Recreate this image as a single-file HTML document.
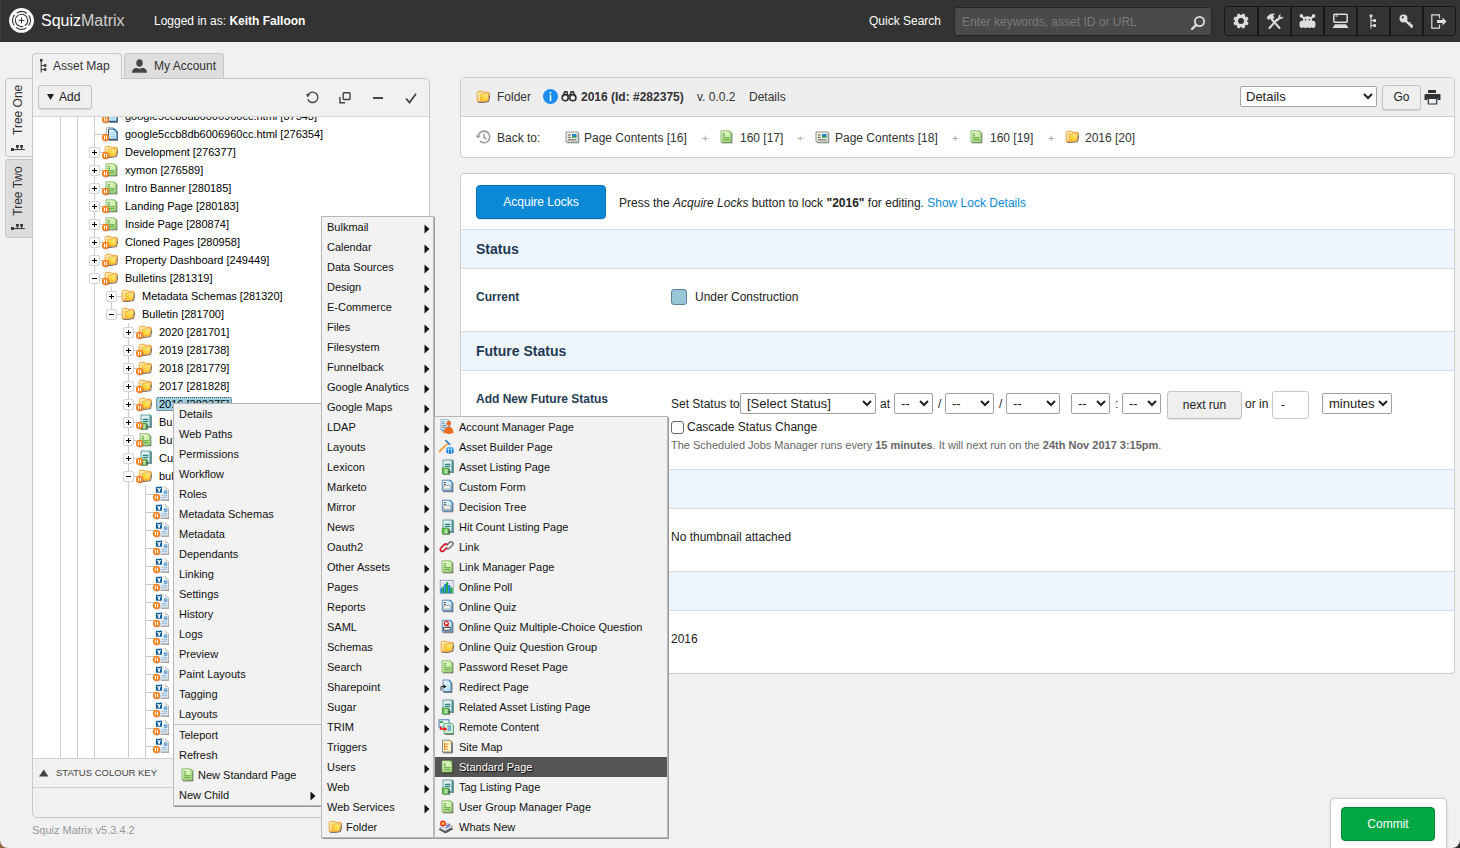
<!DOCTYPE html><html><head><meta charset="utf-8"><style>*{box-sizing:border-box;margin:0;padding:0}
html,body{width:1460px;height:848px;overflow:hidden}
body{background:#f1f1f1;font-family:"Liberation Sans",sans-serif;font-size:13px;color:#222;position:relative}
.a{position:absolute}
#hdr{left:0;top:0;width:1460px;height:42px;background:#333}
.t{position:absolute;white-space:nowrap;line-height:16px}
svg{display:block;overflow:visible}
.vl{position:absolute;width:1px;background:#cbcbcb}
.hl{position:absolute;height:1px;background:#cbcbcb}
.ex{position:absolute;width:11px;height:11px;border:1px solid #d4d4d4;border-radius:2px;background:#fafafa}
.ex:before{content:"";position:absolute;left:2px;top:4px;width:5px;height:1.4px;background:#000}
.ex.p:after{content:"";position:absolute;left:4px;top:2px;width:1.4px;height:5.4px;background:#000}
.ic{position:absolute;width:16px;height:16px}
.row{position:absolute;white-space:nowrap;line-height:16px;font-size:11px;color:#000}
.menu{position:absolute;background:#f2f2f2;border:1px solid #b8b8b8;box-shadow:1px 1px 0 #9a9a9a}
.mi{position:absolute;height:20px;line-height:20px;white-space:nowrap;color:#111;font-size:11px}
.arr{position:absolute;width:0;height:0;border-top:4.5px solid transparent;border-bottom:4.5px solid transparent;border-left:5px solid #111}
.panel{position:absolute;background:#fff;border:1px solid #cdcdcd;border-radius:4px;overflow:hidden}
.sh{position:absolute;left:0;right:0;background:#edf4fc;border-top:1px solid #d3dde8;border-bottom:1px solid #d3dde8}
.shl{position:absolute;left:15px;font-weight:bold;font-size:14px;color:#1f3a53;white-space:nowrap}
.lbl{position:absolute;left:15px;font-weight:bold;font-size:12px;color:#253c52;white-space:nowrap}
.sel{position:absolute;background:#fff;border:1px solid #a6a6a6;border-radius:2px;font-size:14px;color:#222;padding-left:4px;white-space:nowrap;line-height:17px}
.chev{position:absolute;width:6px;height:6px;border-right:2px solid #222;border-bottom:2px solid #222;transform:rotate(45deg)}
.btn{position:absolute;background:#efefef;border:1px solid #c4c4c4;border-radius:3px;box-shadow:0 1px 1px rgba(0,0,0,.12);text-align:center;white-space:nowrap;color:#222}
</style></head><body><svg width="0" height="0" style="position:absolute">
<defs>
<linearGradient id="gf" x1="0" y1="1" x2="1" y2="0"><stop offset="0" stop-color="#f9b13a"/><stop offset="0.45" stop-color="#ffd83c"/><stop offset="1" stop-color="#fff0b0"/></linearGradient>
<linearGradient id="gfb" x1="0" y1="0" x2="1" y2="1"><stop offset="0" stop-color="#fff2c0"/><stop offset="1" stop-color="#f8c868"/></linearGradient>
<linearGradient id="gp" x1="0" y1="0" x2="1" y2="1"><stop offset="0" stop-color="#effbd8"/><stop offset="1" stop-color="#b8e48a"/></linearGradient>
<linearGradient id="gb" x1="0" y1="0" x2="1" y2="1"><stop offset="0" stop-color="#f4fbff"/><stop offset="1" stop-color="#a9d8f2"/></linearGradient>
<linearGradient id="gt" x1="0" y1="0" x2="1" y2="1"><stop offset="0" stop-color="#eaf5f4"/><stop offset="1" stop-color="#c9e3e2"/></linearGradient>
<filter id="sh" x="-20%" y="-20%" width="150%" height="150%"><feGaussianBlur in="SourceAlpha" stdDeviation=".5"/><feOffset dx=".8" dy=".8"/><feComponentTransfer><feFuncA type="linear" slope=".55"/></feComponentTransfer><feMerge><feMergeNode/><feMergeNode in="SourceGraphic"/></feMerge></filter>
<symbol id="folder" viewBox="0 0 16 16">
 <g filter="url(#sh)">
 <path d="M3.2 12.4V3.6l.8-1.3h4.6l.8 1h5.1l.3.6v1.6L13.6 11.6 6.6 12.4z" fill="url(#gfb)" stroke="#f49a2c" stroke-width=".9" stroke-linejoin="round"/>
 <path d="M6.2 5.2l8.5-.5-1.3 6.8-6.9 1z" fill="url(#gf)" stroke="#f7a93a" stroke-width=".7" stroke-linejoin="round"/>
 </g>
</symbol>
<symbol id="page" viewBox="0 0 16 16">
 <g filter="url(#sh)">
 <path d="M4 1.8h8.5l1.5 1.5v9.7h-10z" fill="url(#gp)" stroke="#63a845" stroke-width=".7"/>
 </g>
 <path d="M12.5 1.8v1.5h1.5" fill="#fff" stroke="#63a845" stroke-width=".5"/>
 <path d="M5.5 4.8h2.5M5.5 6.8h2.5M5.5 8.8h7M5.5 10.8h7" stroke="#4e9a35" stroke-width="1"/>
</symbol>
<symbol id="doc" viewBox="0 0 16 16">
 <path d="M4.5 12.5v-11h7" fill="none" stroke="#b8b8b8" stroke-width="1"/>
 <g filter="url(#sh)">
 <path d="M6.5 3h5.6l3 3v7.3h-8.6z" fill="url(#gb)" stroke="#26507e" stroke-width="1"/>
 </g>
 <path d="M11.5 2.5l3.8 3.8" stroke="#1c6aa8" stroke-width="1.5"/>
 <path d="M8.3 6.5h4.5M8.3 8.5h4.5M8.3 10.5h4.5" stroke="#8fcdf0" stroke-width=".8"/>
</symbol>
<symbol id="listing" viewBox="0 0 16 16">
 <g filter="url(#sh)">
 <path d="M5 1h9.8v11.6h-9.8z" fill="url(#gt)" stroke="#3f8e8c" stroke-width=".8"/>
 </g>
 <path d="M14.2 1v11.6" stroke="#3f8e8c" stroke-width="1.2"/>
 <path d="M7.3 5.4h4.6M7.3 7.4h4.6" stroke="#2e8784" stroke-width="1.1" stroke-linecap="round"/>
 <g filter="url(#sh)">
 <path d="M4.2 9h6.3v5.8h-6.3z" fill="#5fb84e" stroke="#3c8d32" stroke-width=".6"/>
 </g>
 <path d="M6.5 10.2h3v4.3h-3z" fill="#b6e3a6"/>
</symbol>
<symbol id="custom" viewBox="0 0 16 16">
 <g filter="url(#sh)">
 <path d="M7 .3h5l3 3v10h-8z" fill="#f6f6f6" stroke="#cfcfcf" stroke-width=".6"/>
 </g>
 <path d="M12 .3v3h3" fill="#d0d0d0"/>
 <rect x="11" y="4.8" width="3" height="3" fill="#7fb2dc" stroke="#5a98cc" stroke-width=".5"/>
 <path d="M8.5 9.5h5.7M8.5 11.6h5.7" stroke="#a3c4de" stroke-width="1.5"/>
 <rect x="2.9" y=".8" width="6.1" height="5.9" fill="#0f5f9e"/>
 <path d="M3.9 1.9h1.5l.7 1 .7-1h1.5l-1.3 1.9v1.9h-1.8v-1.9z" fill="#fff"/>
</symbol>
<symbol id="badge" viewBox="0 0 16 16">
 <circle cx="3.9" cy="11.9" r="3.5" fill="rgba(0,0,40,.35)"/>
 <circle cx="3.4" cy="11.4" r="3.6" fill="#f8801a"/>
 <rect x="1.9" y="9.6" width="1.1" height="3.6" fill="#fff"/>
 <rect x="4" y="9.6" width="1.1" height="3.6" fill="#fff"/>
</symbol>

<symbol id="form" viewBox="0 0 16 16">
 <g filter="url(#sh)"><path d="M4.3 1.2h7.7l2 2v8.6h-9.7z" fill="url(#gb)" stroke="#3c6fa6" stroke-width=".8"/></g>
 <path d="M12 1.2l2 2" stroke="#1f7fd0" stroke-width="1.2"/>
 <path d="M5.8 3.6h2M5.8 5.4h2" stroke="#333" stroke-width=".9"/>
 <rect x="5.8" y="6.8" width="6.5" height="3.2" fill="#fff" stroke="#9a9080" stroke-width=".7"/>
</symbol>
<symbol id="mcq" viewBox="0 0 16 16">
 <g filter="url(#sh)"><path d="M4.3 1.2h7.7l2 2v9.6h-9.7z" fill="url(#gb)" stroke="#3c6fa6" stroke-width=".8"/></g>
 <path d="M12 1.2l2 2" stroke="#1f7fd0" stroke-width="1.2"/>
 <circle cx="8.3" cy="4.3" r="2" fill="none" stroke="#e00" stroke-width="1.1"/><path d="M8.7 5.5l1.8 1.3h-3" stroke="#e00" stroke-width="1" fill="none"/>
 <rect x="5.6" y="8.4" width="6.6" height="2.8" fill="#fff" stroke="#444" stroke-width="1"/>
</symbol>
<symbol id="link" viewBox="0 0 16 16">
 <path d="M8.5 6.5l3.3-3.3a2 2 0 0 1 2.8 2.8l-3.3 3.3a2 2 0 0 1-2.8 0" fill="none" stroke="#777" stroke-width="1.6"/>
 <path d="M9 8.5l-3.5 3.5a2 2 0 0 1-2.8-2.8l3.5-3.5a2 2 0 0 1 2.8 0" fill="none" stroke="#d9142a" stroke-width="1.7"/>
</symbol>
<symbol id="poll" viewBox="0 0 16 16">
 <rect x="2.2" y="1.3" width="13" height="13" fill="#eef0f8" stroke="#8a8fa8" stroke-width=".8"/>
 <path d="M2.2 4.5h13M2.2 7.5h13M5.5 1.3v13M8.7 1.3v13M12 1.3v13" stroke="#c8cce0" stroke-width=".5"/>
 <rect x="2.6" y="9" width="2" height="5.2" fill="#1a7ee0"/><rect x="4.4" y="7.5" width="1.8" height="6.7" fill="#19a83a"/>
 <rect x="6.3" y="5" width="2" height="9.2" fill="#1a7ee0"/><rect x="8.2" y="3.2" width="2" height="11" fill="#19a83a"/>
 <rect x="10.2" y="6" width="2" height="8.2" fill="#1a7ee0"/><rect x="12.2" y="8.5" width="2.4" height="5.7" fill="#19a83a"/>
</symbol>
<symbol id="acct" viewBox="0 0 16 16">
 <g filter="url(#sh)"><path d="M3 0.2h6.5l1.2 1.2v9.6h-7.7z" fill="url(#gb)" stroke="#6f8fae" stroke-width=".7"/></g>
 <path d="M4.3 2.8h2.2M4.3 4.5h2.2M4.3 6.4h4M4.3 8.2h4" stroke="#5a6f86" stroke-width=".8"/>
 <circle cx="10.8" cy="4.3" r="2.3" fill="#f46a20"/>
 <path d="M5.2 14.2l2.3-5q.8-1.5 3.3-1.5t3.3 1.5l1.8 5z" fill="#f06a1e"/>
 <path d="M9 14.5h4" stroke="#d77a2a" stroke-width="1"/>
</symbol>
<symbol id="builder" viewBox="0 0 16 16">
 <path d="M1.5 12.5l7.5-7.3" stroke="#f7a23a" stroke-width="1.8" stroke-linecap="round"/>
 <path d="M6.7 1.6l1.2-.9 4.8 4.5-1 1.3z" fill="#1d76c9"/>
 <ellipse cx="12" cy="13" rx="3.6" ry="1.7" fill="#0e6fce"/>
 <path d="M8.4 9.3v3.7h7.2v-3.7z" fill="#1a86e3"/>
 <ellipse cx="12" cy="9.3" rx="3.6" ry="1.6" fill="#5fb4f4"/>
 <path d="M10.5 9.6v4.3M13.5 9.6v4.3" stroke="#cfe8fb" stroke-width=".8"/>
</symbol>
<symbol id="redirect" viewBox="0 0 16 16">
 <g filter="url(#sh)"><path d="M5 1h6l2 2v9.5h-8z" fill="url(#gb)" stroke="#3c6fa6" stroke-width=".8"/></g>
 <path d="M11 1l2 2" stroke="#1f7fd0" stroke-width="1.1"/>
 <path d="M3 11.5v-4h3" fill="none" stroke="#333" stroke-width="1"/><path d="M5.5 5.5l3 2-3 2z" fill="#111"/>
</symbol>
<symbol id="remote" viewBox="0 0 16 16">
 <rect x="1" y=".8" width="10" height="7.2" fill="#eef4fb" stroke="#3c6fa6" stroke-width=".9"/>
 <rect x="2" y="2.2" width="3" height="1.8" fill="#2aa24a"/>
 <g filter="url(#sh)"><path d="M6 4.3h7.5l1.8 1.8v8.4h-9.3z" fill="#d6f0d8" stroke="#3f9c64" stroke-width=".8"/></g>
 <path d="M9.5 7h3.5M9.5 9h3.5M9.5 11h3.5" stroke="#1a74d0" stroke-width="1"/>
 <path d="M2.5 7.5v2.5h4.5" fill="none" stroke="#e11" stroke-width="1.5"/><path d="M6.5 8l2.7 2-2.7 2z" fill="#e11"/>
</symbol>
<symbol id="sitemap" viewBox="0 0 16 16">
 <g filter="url(#sh)"><path d="M4.5 1.2h7.5l1.5 1.5v10.3h-9z" fill="#fdf2c4" stroke="#5e6f80" stroke-width=".8"/></g>
 <path d="M12 1.2l1.5 1.5" stroke="#f0a000" stroke-width="1.1"/>
 <path d="M6.5 3.5v7.5M6.5 5h4M6.5 7.5h3.5M6.5 10h3.5" stroke="#f07a18" stroke-width=".9" fill="none"/>
</symbol>
<symbol id="whatsnew" viewBox="0 0 16 16">
 <path d="M0.5 10.5l8-4.5 7 4-8 4.5z" fill="#555"/>
 <path d="M1.5 9l8-4.5 5.5 3.2-8 4.5z" fill="#dfe3ea" stroke="#666" stroke-width=".5"/>
 <path d="M8 7l4-2M7.5 9l4.5-2.3" stroke="#4a5ab0" stroke-width="1"/>
 <circle cx="5" cy="4.5" r="3" fill="#f33"/><circle cx="5" cy="4.5" r="1.5" fill="#ffd21e"/>
</symbol>
</defs></svg>
<div id="hdr" class="a"><div class="a" style="left:0;top:0;width:1px;height:42px;background:#3e3e3e"></div><div class="a" style="left:0;top:41px;width:1460px;height:1px;background:#2c2c2c"></div><div class="a" style="left:9px;top:8px"><svg width="25" height="25" viewBox="0 0 25 25"><circle cx="12.5" cy="12.4" r="12.4" fill="#fff"/><circle cx="12.5" cy="12.4" r="8.8" fill="none" stroke="#333" stroke-width="1.1" stroke-dasharray="11 2.8" transform="rotate(-35 12.5 12.4)"/><circle cx="12.5" cy="12.4" r="6.1" fill="none" stroke="#333" stroke-width="1.1" stroke-dasharray="17.2 2" transform="rotate(-110 12.5 12.4)"/><path d="M12.5 9.5v5.8M9.6 12.4h5.8" stroke="#333" stroke-width="1"/></svg></div><div class="t" style="left:41px;top:11px;font-size:16px;line-height:20px;color:#fff">Squiz<span style="color:#cfcfcf">Matrix</span></div><div class="t" style="left:154px;top:13px;font-size:12px;color:#fff">Logged in as: <b>Keith Falloon</b></div><div class="t" style="left:869px;top:13px;font-size:12px;color:#fff">Quick Search</div><div class="a" style="left:954px;top:7px;width:258px;height:29px;background:#4a4a4a;border:1px solid #262626;border-radius:3px"></div><div class="t" style="left:962px;top:14px;font-size:12px;color:#7a7a7a">Enter keywords, asset ID or URL</div><div class="a" style="left:1190px;top:15px"><svg width="16" height="16" viewBox="0 0 16 16"><circle cx="9.5" cy="6.5" r="4.6" fill="none" stroke="#ddd" stroke-width="1.8"/><path d="M6.2 9.8 L2 14" stroke="#ddd" stroke-width="2.4" stroke-linecap="round"/></svg></div><div class="a" style="left:1224px;top:6px;width:232px;height:30px;background:#333;border:1px solid #161616;border-radius:4px"></div><div class="a" style="left:1257px;top:7px;width:2px;height:28px;background:#161616"></div><div class="a" style="left:1290px;top:7px;width:2px;height:28px;background:#161616"></div><div class="a" style="left:1323px;top:7px;width:2px;height:28px;background:#161616"></div><div class="a" style="left:1356px;top:7px;width:2px;height:28px;background:#161616"></div><div class="a" style="left:1389px;top:7px;width:2px;height:28px;background:#161616"></div><div class="a" style="left:1422px;top:7px;width:2px;height:28px;background:#161616"></div><svg class="a" style="left:1233px;top:13px" width="16" height="16" viewBox="-8 -8 16 16"><g fill="#ddd"><rect x="-1.5" y="-7.6" width="3" height="3.5" rx=".4" transform="rotate(22.5)"/><rect x="-1.5" y="-7.6" width="3" height="3.5" rx=".4" transform="rotate(67.5)"/><rect x="-1.5" y="-7.6" width="3" height="3.5" rx=".4" transform="rotate(112.5)"/><rect x="-1.5" y="-7.6" width="3" height="3.5" rx=".4" transform="rotate(157.5)"/><rect x="-1.5" y="-7.6" width="3" height="3.5" rx=".4" transform="rotate(202.5)"/><rect x="-1.5" y="-7.6" width="3" height="3.5" rx=".4" transform="rotate(247.5)"/><rect x="-1.5" y="-7.6" width="3" height="3.5" rx=".4" transform="rotate(292.5)"/><rect x="-1.5" y="-7.6" width="3" height="3.5" rx=".4" transform="rotate(337.5)"/></g><circle r="4.6" fill="none" stroke="#ddd" stroke-width="3.2"/></svg><svg class="a" style="left:1266px;top:13px" width="17" height="16" viewBox="0 0 17 16"><path d="M3.5 15L11 6.5" stroke="#ddd" stroke-width="2" stroke-linecap="round"/><path d="M13.5 15L5.5 6" stroke="#ddd" stroke-width="2" stroke-linecap="round"/><path d="M0.5 4.5l3-3q3-1.5 5.5-.5l-2 1.5 1.5 2-2.5 2.5-1.5-1.5-2 1.5z" fill="#ddd"/><path d="M10 7l2.5-2.5q-.5-3 2.5-3.5l-1 2 1.5 1.5 2-1q-.5 3-3.5 2.5l-2.5 2.5z" fill="#ddd"/></svg><svg class="a" style="left:1299px;top:14px" width="17" height="15" viewBox="0 0 17 15"><circle cx="2.4" cy="1.9" r="1.8" fill="#ddd"/><circle cx="14.6" cy="1.9" r="1.8" fill="#ddd"/><path d="M2.4 1.9L5 4.5M14.6 1.9L12 4.5" stroke="#ddd" stroke-width="2"/><path d="M4 8V5.5Q4 2.2 8.5 2.2T13 5.5V8z" fill="#ddd"/><path d="M3 6.8h11q2.5 0 2.5 3v1.5q0 2.6-2.2 2.6-1 0-1.6-.7-.9.8-2.2.8t-2-.8q-.7.8-2 .8t-2.2-.8q-.6.7-1.6.7Q.5 13.9.5 11.3V9.8q0-3 2.5-3z" fill="#ddd"/><path d="M5.6 6.3l1-1.8 1 1.8zM9.4 6.3l1-1.8 1 1.8z" fill="#333"/></svg><svg class="a" style="left:1332px;top:13px" width="17" height="16" viewBox="0 0 17 16"><rect x="1.8" y="1.3" width="13.4" height="8" rx="1" fill="none" stroke="#ddd" stroke-width="1.5"/><path d="M3.5 3h2.5" stroke="#ddd" stroke-width="1.1"/><path d="M3 11.3h11l2.5 3.7h-16z" fill="#ddd"/></svg><svg class="a" style="left:1369px;top:14px" width="8" height="15" viewBox="0 0 8 15"><rect x=".6" y=".5" width="2.8" height="2.8" fill="#ddd"/><path d="M2 3v11.5M2 6.5h2.5M2 11.5h2.5" stroke="#ddd" stroke-width="1.1"/><rect x="4.2" y="5.2" width="2.8" height="2.8" fill="#ddd"/><rect x="4.2" y="10.2" width="2.8" height="2.8" fill="#ddd"/></svg><svg class="a" style="left:1399px;top:14px" width="15" height="15" viewBox="0 0 15 15"><circle cx="4.5" cy="4.5" r="4" fill="#ddd"/><circle cx="3.8" cy="3.3" r="1.1" fill="#333"/><path d="M6.5 6.5l7 7" stroke="#ddd" stroke-width="2.4"/><path d="M10 10l1.5-1.5M12 12l1.5-1.5" stroke="#ddd" stroke-width="1.6"/></svg><svg class="a" style="left:1431px;top:14px" width="16" height="15" viewBox="0 0 16 15"><path d="M8.5 4.5V.8H.8v13.4h7.7v-3.7" fill="none" stroke="#ddd" stroke-width="1.2"/><path d="M6 6h5.5V3.5l4 4-4 4V9H6z" fill="#ddd"/></svg></div><div class="a" style="left:5px;top:78px;width:28px;height:79px;background:#f1f1f1;border:1px solid #c8c8c8;border-right:none;border-radius:4px 0 0 4px"></div><div class="t" style="left:-7px;top:102px;width:50px;font-size:12px;color:#333;transform:rotate(-90deg);text-align:center">Tree One</div><svg class="a" style="left:11px;top:144px" width="14" height="7" viewBox="0 0 14 7"><rect x="0" y="4" width="2.8" height="3" fill="#333"/><path d="M2 5.6h11.8M6.4 5.6v-2M10.6 5.6v-2" stroke="#333" stroke-width="1"/><rect x="5" y="1" width="2.8" height="2.7" fill="#333"/><rect x="9.2" y="1" width="2.8" height="2.7" fill="#333"/></svg><div class="a" style="left:5px;top:159px;width:27px;height:79px;background:#dddddd;border:1px solid #c8c8c8;border-right:none;border-radius:4px 0 0 4px"></div><svg class="a" style="left:11px;top:223px" width="14" height="7" viewBox="0 0 14 7"><rect x="0" y="4" width="2.8" height="3" fill="#333"/><path d="M2 5.6h11.8M6.4 5.6v-2M10.6 5.6v-2" stroke="#333" stroke-width="1"/><rect x="5" y="1" width="2.8" height="2.7" fill="#333"/><rect x="9.2" y="1" width="2.8" height="2.7" fill="#333"/></svg><div class="t" style="left:-7px;top:183px;width:50px;font-size:12px;color:#333;transform:rotate(-90deg);text-align:center">Tree Two</div><div class="a" style="left:32px;top:53px;width:90px;height:26px;background:#f1f1f1;border:1px solid #c8c8c8;border-bottom:none;border-radius:4px 4px 0 0;z-index:2"></div><div class="t" style="left:53px;top:58px;font-size:12px;color:#333;z-index:3">Asset Map</div><svg class="a" style="left:40px;top:59px;z-index:3" width="7" height="14" viewBox="0 0 7 14"><rect x="0" y="0" width="2.5" height="2.5" fill="#333"/><path d="M1.2 2v11.5M1.2 6.5h2.5M1.2 10.5h2.5" stroke="#333" stroke-width="1"/><rect x="3.8" y="5.2" width="2.6" height="2.6" fill="#333"/><rect x="3.8" y="9.2" width="2.6" height="2.6" fill="#333"/></svg><svg class="a" style="left:132px;top:59px;z-index:3" width="15" height="14" viewBox="0 0 15 14"><ellipse cx="7.5" cy="4" rx="3.2" ry="3.8" fill="#444"/><path d="M0 13.8q0-4 4-5l3.5 1 3.5-1q4 1 4 5z" fill="#444"/></svg><div class="a" style="left:124px;top:53px;width:100px;height:25px;background:#dedede;border:1px solid #c8c8c8;border-bottom:none;border-radius:4px 4px 0 0"></div><div class="t" style="left:154px;top:58px;font-size:12px;color:#333">My Account</div><div class="a" style="left:32px;top:78px;width:398px;height:740px;background:#f1f1f1;border:1px solid #c8c8c8;border-radius:0 5px 5px 5px;overflow:hidden;z-index:1"><div class="btn" style="left:5px;top:6px;width:54px;height:24px"></div><div class="t" style="left:26px;top:10px;font-size:12px;color:#222">Add</div><svg class="a" style="left:14px;top:15px" width="7" height="6" viewBox="0 0 7 6"><path d="M0 0h7L3.5 6z" fill="#222"/></svg><svg class="a" style="left:272px;top:11px" width="14" height="14" viewBox="0 0 14 14"><path d="M3.2 4.6A5.2 5.2 0 1 1 2.8 9.2" fill="none" stroke="#444" stroke-width="1.4"/><path d="M1 3.8l4.2.4-2.6 3.2z" fill="#444"/></svg><svg class="a" style="left:306px;top:13px" width="12" height="12" viewBox="0 0 12 12"><rect x="4.2" y=".7" width="6.8" height="6.8" rx=".8" fill="none" stroke="#444" stroke-width="1.4"/><path d="M.9 5v5.8h5.2" fill="none" stroke="#444" stroke-width="1.4"/></svg><div class="a" style="left:340px;top:18px;width:10px;height:2px;background:#444"></div><svg class="a" style="left:372px;top:14px" width="12" height="11" viewBox="0 0 12 11"><path d="M1 5.5l3.5 4L11 .8" fill="none" stroke="#444" stroke-width="1.8"/></svg><div class="a" style="left:0;top:679px;width:396px;height:30px;border-top:1px solid #cfcfcf;border-bottom:1px solid #cfcfcf"></div><div class="t" style="left:23px;top:686px;font-size:9.5px;color:#444">STATUS COLOUR KEY</div><svg class="a" style="left:6px;top:690px" width="10" height="8" viewBox="0 0 10 8"><path d="M0 7.5L4.8 .5 9.5 7.5z" fill="#444"/></svg></div><div class="a" style="left:33px;top:116px;width:396px;height:1px;background:#d6d6d6;z-index:2"></div><div class="a" style="left:33px;top:116px;width:396px;height:642px;background:#fff;overflow:hidden;z-index:1"><div class="vl" style="left:27px;top:-116px;height:760px"></div><div class="vl" style="left:44px;top:-116px;height:760px"></div><div class="vl" style="left:61px;top:-116px;height:760px"></div><div class="vl" style="left:78px;top:171px;height:27px"></div><div class="vl" style="left:95px;top:207px;height:437px"></div><div class="vl" style="left:112px;top:369px;height:275px"></div><div class="hl" style="left:61px;top:0px;width:10px"></div><svg class="ic" style="left:69px;top:-8px;width:16px;height:16px" viewBox="0 0 16 16"><use href="#doc"/><use href="#badge"/></svg><div class="row" style="left:92px;top:-8px;font-size:11px">google5ccb8db6006960cc.html [87543]</div><div class="hl" style="left:61px;top:18px;width:10px"></div><svg class="ic" style="left:69px;top:10px;width:16px;height:16px" viewBox="0 0 16 16"><use href="#doc"/><use href="#badge"/></svg><div class="row" style="left:92px;top:10px;font-size:11px">google5ccb8db6006960cc.html [276354]</div><div class="hl" style="left:66px;top:36px;width:10px"></div><div class="ex p" style="left:56px;top:31px"></div><svg class="ic" style="left:69px;top:28px;width:16px;height:16px" viewBox="0 0 16 16"><use href="#folder"/><use href="#badge"/></svg><div class="row" style="left:92px;top:28px;font-size:11px">Development [276377]</div><div class="hl" style="left:66px;top:54px;width:10px"></div><div class="ex p" style="left:56px;top:49px"></div><svg class="ic" style="left:69px;top:46px;width:16px;height:16px" viewBox="0 0 16 16"><use href="#page"/><use href="#badge"/></svg><div class="row" style="left:92px;top:46px;font-size:11px">xymon [276589]</div><div class="hl" style="left:66px;top:72px;width:10px"></div><div class="ex p" style="left:56px;top:67px"></div><svg class="ic" style="left:69px;top:64px;width:16px;height:16px" viewBox="0 0 16 16"><use href="#page"/><use href="#badge"/></svg><div class="row" style="left:92px;top:64px;font-size:11px">Intro Banner [280185]</div><div class="hl" style="left:66px;top:90px;width:10px"></div><div class="ex p" style="left:56px;top:85px"></div><svg class="ic" style="left:69px;top:82px;width:16px;height:16px" viewBox="0 0 16 16"><use href="#page"/><use href="#badge"/></svg><div class="row" style="left:92px;top:82px;font-size:11px">Landing Page [280183]</div><div class="hl" style="left:66px;top:108px;width:10px"></div><div class="ex p" style="left:56px;top:103px"></div><svg class="ic" style="left:69px;top:100px;width:16px;height:16px" viewBox="0 0 16 16"><use href="#page"/><use href="#badge"/></svg><div class="row" style="left:92px;top:100px;font-size:11px">Inside Page [280874]</div><div class="hl" style="left:66px;top:126px;width:10px"></div><div class="ex p" style="left:56px;top:121px"></div><svg class="ic" style="left:69px;top:118px;width:16px;height:16px" viewBox="0 0 16 16"><use href="#folder"/><use href="#badge"/></svg><div class="row" style="left:92px;top:118px;font-size:11px">Cloned Pages [280958]</div><div class="hl" style="left:66px;top:144px;width:10px"></div><div class="ex p" style="left:56px;top:139px"></div><svg class="ic" style="left:69px;top:136px;width:16px;height:16px" viewBox="0 0 16 16"><use href="#folder"/><use href="#badge"/></svg><div class="row" style="left:92px;top:136px;font-size:11px">Property Dashboard [249449]</div><div class="hl" style="left:66px;top:162px;width:10px"></div><div class="ex" style="left:56px;top:157px"></div><svg class="ic" style="left:69px;top:154px;width:16px;height:16px" viewBox="0 0 16 16"><use href="#folder"/><use href="#badge"/></svg><div class="row" style="left:92px;top:154px;font-size:11px">Bulletins [281319]</div><div class="hl" style="left:83px;top:180px;width:10px"></div><div class="ex p" style="left:73px;top:175px"></div><svg class="ic" style="left:86px;top:172px;width:16px;height:16px" viewBox="0 0 16 16"><use href="#folder"/></svg><div class="row" style="left:109px;top:172px;font-size:11px">Metadata Schemas [281320]</div><div class="hl" style="left:83px;top:198px;width:10px"></div><div class="ex" style="left:73px;top:193px"></div><svg class="ic" style="left:86px;top:190px;width:16px;height:16px" viewBox="0 0 16 16"><use href="#folder"/></svg><div class="row" style="left:109px;top:190px;font-size:11px">Bulletin [281700]</div><div class="hl" style="left:100px;top:216px;width:10px"></div><div class="ex p" style="left:90px;top:211px"></div><svg class="ic" style="left:103px;top:208px;width:16px;height:16px" viewBox="0 0 16 16"><use href="#folder"/><use href="#badge"/></svg><div class="row" style="left:126px;top:208px;font-size:11px">2020 [281701]</div><div class="hl" style="left:100px;top:234px;width:10px"></div><div class="ex p" style="left:90px;top:229px"></div><svg class="ic" style="left:103px;top:226px;width:16px;height:16px" viewBox="0 0 16 16"><use href="#folder"/><use href="#badge"/></svg><div class="row" style="left:126px;top:226px;font-size:11px">2019 [281738]</div><div class="hl" style="left:100px;top:252px;width:10px"></div><div class="ex p" style="left:90px;top:247px"></div><svg class="ic" style="left:103px;top:244px;width:16px;height:16px" viewBox="0 0 16 16"><use href="#folder"/><use href="#badge"/></svg><div class="row" style="left:126px;top:244px;font-size:11px">2018 [281779]</div><div class="hl" style="left:100px;top:270px;width:10px"></div><div class="ex p" style="left:90px;top:265px"></div><svg class="ic" style="left:103px;top:262px;width:16px;height:16px" viewBox="0 0 16 16"><use href="#folder"/><use href="#badge"/></svg><div class="row" style="left:126px;top:262px;font-size:11px">2017 [281828]</div><div class="hl" style="left:100px;top:288px;width:10px"></div><div class="ex p" style="left:90px;top:283px"></div><svg class="ic" style="left:103px;top:280px;width:16px;height:16px" viewBox="0 0 16 16"><use href="#folder"/><use href="#badge"/></svg><div class="a" style="left:123px;top:281px;width:76px;height:14px;background:#9dcfe0;border:1px dotted #555;border-radius:2px"></div><div class="row" style="left:126px;top:280px;font-size:11px">2016 [282375]</div><div class="hl" style="left:100px;top:306px;width:10px"></div><div class="ex p" style="left:90px;top:301px"></div><svg class="ic" style="left:103px;top:298px;width:16px;height:16px" viewBox="0 0 16 16"><use href="#listing"/><use href="#badge"/></svg><div class="row" style="left:126px;top:298px;font-size:11px">Bulletin Listing</div><div class="hl" style="left:100px;top:324px;width:10px"></div><div class="ex p" style="left:90px;top:319px"></div><svg class="ic" style="left:103px;top:316px;width:16px;height:16px" viewBox="0 0 16 16"><use href="#page"/><use href="#badge"/></svg><div class="row" style="left:126px;top:316px;font-size:11px">Bulletin Page</div><div class="hl" style="left:100px;top:342px;width:10px"></div><div class="ex p" style="left:90px;top:337px"></div><svg class="ic" style="left:103px;top:334px;width:16px;height:16px" viewBox="0 0 16 16"><use href="#listing"/><use href="#badge"/></svg><div class="row" style="left:126px;top:334px;font-size:11px">Custom Listing</div><div class="hl" style="left:100px;top:360px;width:10px"></div><div class="ex" style="left:90px;top:355px"></div><svg class="ic" style="left:103px;top:352px;width:16px;height:16px" viewBox="0 0 16 16"><use href="#folder"/><use href="#badge"/></svg><div class="row" style="left:126px;top:352px;font-size:11px">bulletins</div><div class="hl" style="left:112px;top:378px;width:10px"></div><svg class="ic" style="left:120px;top:370px;width:16px;height:16px" viewBox="0 0 16 16"><use href="#custom"/><use href="#badge"/></svg><div class="row" style="left:143px;top:370px;font-size:11px">Bulletin item</div><div class="hl" style="left:112px;top:396px;width:10px"></div><svg class="ic" style="left:120px;top:388px;width:16px;height:16px" viewBox="0 0 16 16"><use href="#custom"/><use href="#badge"/></svg><div class="row" style="left:143px;top:388px;font-size:11px">Bulletin item</div><div class="hl" style="left:112px;top:414px;width:10px"></div><svg class="ic" style="left:120px;top:406px;width:16px;height:16px" viewBox="0 0 16 16"><use href="#custom"/><use href="#badge"/></svg><div class="row" style="left:143px;top:406px;font-size:11px">Bulletin item</div><div class="hl" style="left:112px;top:432px;width:10px"></div><svg class="ic" style="left:120px;top:424px;width:16px;height:16px" viewBox="0 0 16 16"><use href="#custom"/><use href="#badge"/></svg><div class="row" style="left:143px;top:424px;font-size:11px">Bulletin item</div><div class="hl" style="left:112px;top:450px;width:10px"></div><svg class="ic" style="left:120px;top:442px;width:16px;height:16px" viewBox="0 0 16 16"><use href="#custom"/><use href="#badge"/></svg><div class="row" style="left:143px;top:442px;font-size:11px">Bulletin item</div><div class="hl" style="left:112px;top:468px;width:10px"></div><svg class="ic" style="left:120px;top:460px;width:16px;height:16px" viewBox="0 0 16 16"><use href="#custom"/><use href="#badge"/></svg><div class="row" style="left:143px;top:460px;font-size:11px">Bulletin item</div><div class="hl" style="left:112px;top:486px;width:10px"></div><svg class="ic" style="left:120px;top:478px;width:16px;height:16px" viewBox="0 0 16 16"><use href="#custom"/><use href="#badge"/></svg><div class="row" style="left:143px;top:478px;font-size:11px">Bulletin item</div><div class="hl" style="left:112px;top:504px;width:10px"></div><svg class="ic" style="left:120px;top:496px;width:16px;height:16px" viewBox="0 0 16 16"><use href="#custom"/><use href="#badge"/></svg><div class="row" style="left:143px;top:496px;font-size:11px">Bulletin item</div><div class="hl" style="left:112px;top:522px;width:10px"></div><svg class="ic" style="left:120px;top:514px;width:16px;height:16px" viewBox="0 0 16 16"><use href="#custom"/><use href="#badge"/></svg><div class="row" style="left:143px;top:514px;font-size:11px">Bulletin item</div><div class="hl" style="left:112px;top:540px;width:10px"></div><svg class="ic" style="left:120px;top:532px;width:16px;height:16px" viewBox="0 0 16 16"><use href="#custom"/><use href="#badge"/></svg><div class="row" style="left:143px;top:532px;font-size:11px">Bulletin item</div><div class="hl" style="left:112px;top:558px;width:10px"></div><svg class="ic" style="left:120px;top:550px;width:16px;height:16px" viewBox="0 0 16 16"><use href="#custom"/><use href="#badge"/></svg><div class="row" style="left:143px;top:550px;font-size:11px">Bulletin item</div><div class="hl" style="left:112px;top:576px;width:10px"></div><svg class="ic" style="left:120px;top:568px;width:16px;height:16px" viewBox="0 0 16 16"><use href="#custom"/><use href="#badge"/></svg><div class="row" style="left:143px;top:568px;font-size:11px">Bulletin item</div><div class="hl" style="left:112px;top:594px;width:10px"></div><svg class="ic" style="left:120px;top:586px;width:16px;height:16px" viewBox="0 0 16 16"><use href="#custom"/><use href="#badge"/></svg><div class="row" style="left:143px;top:586px;font-size:11px">Bulletin item</div><div class="hl" style="left:112px;top:612px;width:10px"></div><svg class="ic" style="left:120px;top:604px;width:16px;height:16px" viewBox="0 0 16 16"><use href="#custom"/><use href="#badge"/></svg><div class="row" style="left:143px;top:604px;font-size:11px">Bulletin item</div><div class="hl" style="left:112px;top:630px;width:10px"></div><svg class="ic" style="left:120px;top:622px;width:16px;height:16px" viewBox="0 0 16 16"><use href="#custom"/><use href="#badge"/></svg><div class="row" style="left:143px;top:622px;font-size:11px">Bulletin item</div></div><div class="t" style="left:32px;top:822px;font-size:11px;color:#999">Squiz Matrix v5.3.4.2</div><div class="a" style="left:460px;top:77px;width:995px;height:81px;background:#fff;border:1px solid #cdcdcd;border-radius:4px;overflow:hidden"><div class="a" style="left:0;top:0;width:993px;height:39px;background:#eeeeee;border-bottom:1px solid #cfcfcf"></div></div><svg class="ic" style="left:474px;top:89px;width:16px;height:16px" viewBox="0 0 16 16"><use href="#folder"/></svg><div class="t" style="left:497px;top:89px;font-size:12px;color:#333">Folder</div><div class="a" style="left:543px;top:89px;width:15px;height:15px;border-radius:50%;background:#1a8cf0"></div><svg class="a" style="left:543px;top:89px" width="15" height="15" viewBox="0 0 15 15"><rect x="6.7" y="3" width="1.6" height="1.7" fill="#fff"/><rect x="6.7" y="5.8" width="1.6" height="6.2" fill="#fff"/></svg><svg class="a" style="left:561px;top:90px" width="16" height="12" viewBox="0 0 18 14"><circle cx="4.5" cy="9" r="3.6" fill="none" stroke="#333" stroke-width="1.8"/><circle cx="13.5" cy="9" r="3.6" fill="none" stroke="#333" stroke-width="1.8"/><path d="M2 7.5l2-5.5h2.5l1 4M16 7.5l-2-5.5h-2.5l-1 4M7 6.5h4" stroke="#333" stroke-width="1.8" fill="none"/></svg><div class="t" style="left:581px;top:89px;font-size:12px;font-weight:bold;color:#333">2016 (Id: #282375)</div><div class="t" style="left:697px;top:89px;font-size:12px;color:#333">v. 0.0.2</div><div class="t" style="left:749px;top:89px;font-size:12px;color:#333">Details</div><div class="sel" style="left:1240px;top:86px;width:137px;height:21px;font-size:13px;line-height:19px;padding-left:5px">Details</div><svg class="a" style="left:1363px;top:93px" width="10" height="6" viewBox="0 0 10 6"><path d="M1 1L5 5L9 1" fill="none" stroke="#222" stroke-width="2"/></svg><div class="btn" style="left:1382px;top:85px;width:39px;height:25px;line-height:23px;font-size:12px">Go</div><svg class="a" style="left:1424px;top:89px" width="17" height="16" viewBox="0 0 17 16"><path d="M4 1h8v3h-8z" fill="#333"/><path d="M1.5 5h14q1 0 1 1v5h-3v-2h-10v2h-3v-5q0-1 1-1z" fill="#333"/><path d="M4.3 9.5h8.4v5.5h-8.4z" fill="#e8f0f8" stroke="#333" stroke-width="1.2"/></svg><svg class="a" style="left:475px;top:129px" width="17" height="16" viewBox="0 0 17 16"><path d="M3.2 8a5.8 5.8 0 1 1 1.8 4.2" fill="none" stroke="#9a9a9a" stroke-width="1.6"/><path d="M0.5 6.5l2.7 3 2.7-3z" fill="#9a9a9a"/><path d="M9 4.5v4l2.5 1.5" fill="none" stroke="#9a9a9a" stroke-width="1.5"/></svg><div class="t" style="left:497px;top:130px;font-size:12px;color:#333">Back to:</div><svg class="a" style="left:565px;top:131px" width="15" height="13" viewBox="0 0 15 13"><path d="M1.5 1.5h12v10h-12z" fill="rgba(0,0,0,.35)" transform="translate(.9,.9)"/><path d="M1 1h12.2v10h-12.2z" fill="#f7f3dc" stroke="#7b8a90" stroke-width=".9"/><path d="M2.8 4h3M2.8 6.4h3M2.8 8.8h8.6" stroke="#444" stroke-width=".9"/><path d="M7 3h4.5v3.5h-4.5z" fill="#1d86d6"/><path d="M7 5.2h4.5v1.3h-4.5z" fill="#2f9e3a"/></svg><div class="t" style="left:584px;top:130px;font-size:12px;color:#333">Page Contents [16]</div><div class="t" style="left:702px;top:130px;font-size:11px;color:#aaa">+</div><svg class="ic" style="left:717px;top:129px;width:16px;height:16px" viewBox="0 0 16 16"><use href="#page"/></svg><div class="t" style="left:740px;top:130px;font-size:12px;color:#333">160 [17]</div><div class="t" style="left:797px;top:130px;font-size:11px;color:#aaa">+</div><svg class="a" style="left:815px;top:131px" width="15" height="13" viewBox="0 0 15 13"><path d="M1.5 1.5h12v10h-12z" fill="rgba(0,0,0,.35)" transform="translate(.9,.9)"/><path d="M1 1h12.2v10h-12.2z" fill="#f7f3dc" stroke="#7b8a90" stroke-width=".9"/><path d="M2.8 4h3M2.8 6.4h3M2.8 8.8h8.6" stroke="#444" stroke-width=".9"/><path d="M7 3h4.5v3.5h-4.5z" fill="#1d86d6"/><path d="M7 5.2h4.5v1.3h-4.5z" fill="#2f9e3a"/></svg><div class="t" style="left:835px;top:130px;font-size:12px;color:#333">Page Contents [18]</div><div class="t" style="left:952px;top:130px;font-size:11px;color:#aaa">+</div><svg class="ic" style="left:967px;top:129px;width:16px;height:16px" viewBox="0 0 16 16"><use href="#page"/></svg><div class="t" style="left:990px;top:130px;font-size:12px;color:#333">160 [19]</div><div class="t" style="left:1048px;top:130px;font-size:11px;color:#aaa">+</div><svg class="ic" style="left:1063px;top:129px;width:16px;height:16px" viewBox="0 0 16 16"><use href="#folder"/></svg><div class="t" style="left:1085px;top:130px;font-size:12px;color:#333">2016 [20]</div><div class="a" style="left:460px;top:173px;width:995px;height:501px;background:#fff;border:1px solid #cdcdcd;border-radius:4px;overflow:hidden"><div class="sh" style="top:55px;height:40px"></div><div class="sh" style="top:157px;height:40px"></div><div class="sh" style="top:295px;height:40px"></div><div class="sh" style="top:397px;height:40px"></div></div><div class="btn" style="left:476px;top:185px;width:130px;height:34px;background:#0a89d6;border:1px solid #0873b6;color:#fff;font-size:12px;line-height:32px;border-radius:4px">Acquire Locks</div><div class="t" style="left:619px;top:195px;font-size:12px;color:#222">Press the <i>Acquire Locks</i> button to lock <b>"2016"</b> for editing. <span style="color:#0a8ad6">Show Lock Details</span></div><div class="shl" style="left:476px;top:241px">Status</div><div class="lbl" style="left:476px;top:290px">Current</div><div class="a" style="left:671px;top:289px;width:16px;height:16px;background:#98c8d8;border:1px solid #5e8494;border-radius:3px"></div><div class="t" style="left:695px;top:289px;font-size:12px;color:#222">Under Construction</div><div class="shl" style="left:476px;top:343px">Future Status</div><div class="lbl" style="left:476px;top:392px">Add New Future Status</div><div class="t" style="left:671px;top:396px;font-size:12px;color:#222">Set Status to</div><div class="sel" style="left:740px;top:393px;width:136px;height:21px;font-size:13px;line-height:19px;padding-left:6px;border-color:#a0a0a0">[Select Status]</div><svg class="a" style="left:862px;top:400px" width="10" height="6" viewBox="0 0 10 6"><path d="M1 1L5 5L9 1" fill="none" stroke="#222" stroke-width="2"/></svg><div class="sel" style="left:894px;top:393px;width:39px;height:21px;font-size:13px;line-height:19px;padding-left:6px;border-color:#a0a0a0">--</div><svg class="a" style="left:919px;top:400px" width="10" height="6" viewBox="0 0 10 6"><path d="M1 1L5 5L9 1" fill="none" stroke="#222" stroke-width="2"/></svg><div class="sel" style="left:945px;top:393px;width:49px;height:21px;font-size:13px;line-height:19px;padding-left:6px;border-color:#a0a0a0">--</div><svg class="a" style="left:980px;top:400px" width="10" height="6" viewBox="0 0 10 6"><path d="M1 1L5 5L9 1" fill="none" stroke="#222" stroke-width="2"/></svg><div class="sel" style="left:1006px;top:393px;width:54px;height:21px;font-size:13px;line-height:19px;padding-left:6px;border-color:#a0a0a0">--</div><svg class="a" style="left:1046px;top:400px" width="10" height="6" viewBox="0 0 10 6"><path d="M1 1L5 5L9 1" fill="none" stroke="#222" stroke-width="2"/></svg><div class="sel" style="left:1071px;top:393px;width:39px;height:21px;font-size:13px;line-height:19px;padding-left:6px;border-color:#a0a0a0">--</div><svg class="a" style="left:1096px;top:400px" width="10" height="6" viewBox="0 0 10 6"><path d="M1 1L5 5L9 1" fill="none" stroke="#222" stroke-width="2"/></svg><div class="sel" style="left:1122px;top:393px;width:39px;height:21px;font-size:13px;line-height:19px;padding-left:6px;border-color:#a0a0a0">--</div><svg class="a" style="left:1147px;top:400px" width="10" height="6" viewBox="0 0 10 6"><path d="M1 1L5 5L9 1" fill="none" stroke="#222" stroke-width="2"/></svg><div class="sel" style="left:1322px;top:393px;width:70px;height:21px;font-size:13px;line-height:19px;padding-left:6px;border-color:#a0a0a0">minutes</div><svg class="a" style="left:1378px;top:400px" width="10" height="6" viewBox="0 0 10 6"><path d="M1 1L5 5L9 1" fill="none" stroke="#222" stroke-width="2"/></svg><div class="t" style="left:880px;top:396px;font-size:12px;color:#222">at</div><div class="t" style="left:938px;top:396px;font-size:12px;color:#222">/</div><div class="t" style="left:999px;top:396px;font-size:12px;color:#222">/</div><div class="t" style="left:1115px;top:396px;font-size:12px;color:#222">:</div><div class="btn" style="left:1167px;top:391px;width:75px;height:28px;line-height:26px;font-size:12px">next run</div><div class="t" style="left:1245px;top:396px;font-size:12px;color:#222">or in</div><div class="a" style="left:1272px;top:391px;width:37px;height:28px;border:1px solid #c9c9c9;border-radius:3px;background:#fff"></div><div class="t" style="left:1281px;top:397px;font-size:12px;color:#222">-</div><div class="a" style="left:671px;top:421px;width:13px;height:13px;border:1px solid #666;border-radius:3px;background:#fff"></div><div class="t" style="left:687px;top:419px;font-size:12px;color:#222">Cascade Status Change</div><div class="t" style="left:671px;top:437px;font-size:11px;color:#666">The Scheduled Jobs Manager runs every <b>15 minutes</b>. It will next run on the <b>24th Nov 2017 3:15pm</b>.</div><div class="t" style="left:671px;top:529px;font-size:12px;color:#222">No thumbnail attached</div><div class="t" style="left:671px;top:631px;font-size:12px;color:#222">2016</div><div class="a" style="left:1330px;top:798px;width:117px;height:60px;background:#fff;border:1px solid #cfcfcf;border-radius:5px;box-shadow:0 0 3px rgba(0,0,0,.12)"></div><div class="btn" style="left:1341px;top:807px;width:94px;height:34px;background:#00a844;border:1px solid #008a36;color:#fff;font-size:12px;line-height:32px;border-radius:4px;box-shadow:none">Commit</div><div class="menu" style="left:173px;top:403px;width:149px;height:403px;z-index:5"></div><div class="a" style="left:174px;top:724px;width:147px;height:1px;background:#c4c4c4;z-index:5"></div><div class="mi" style="left:179px;top:404px;z-index:6">Details</div><div class="mi" style="left:179px;top:424px;z-index:6">Web Paths</div><div class="mi" style="left:179px;top:444px;z-index:6">Permissions</div><div class="mi" style="left:179px;top:464px;z-index:6">Workflow</div><div class="mi" style="left:179px;top:484px;z-index:6">Roles</div><div class="mi" style="left:179px;top:504px;z-index:6">Metadata Schemas</div><div class="mi" style="left:179px;top:524px;z-index:6">Metadata</div><div class="mi" style="left:179px;top:544px;z-index:6">Dependants</div><div class="mi" style="left:179px;top:564px;z-index:6">Linking</div><div class="mi" style="left:179px;top:584px;z-index:6">Settings</div><div class="mi" style="left:179px;top:604px;z-index:6">History</div><div class="mi" style="left:179px;top:624px;z-index:6">Logs</div><div class="mi" style="left:179px;top:644px;z-index:6">Preview</div><div class="mi" style="left:179px;top:664px;z-index:6">Paint Layouts</div><div class="mi" style="left:179px;top:684px;z-index:6">Tagging</div><div class="mi" style="left:179px;top:704px;z-index:6">Layouts</div><div class="mi" style="left:179px;top:725px;z-index:6">Teleport</div><div class="mi" style="left:179px;top:745px;z-index:6">Refresh</div><svg class="ic" style="z-index:6;left:178px;top:767px;width:16px;height:16px" viewBox="0 0 16 16"><use href="#page"/></svg><div class="mi" style="left:198px;top:765px;z-index:6">New Standard Page</div><div class="mi" style="left:179px;top:785px;z-index:6">New Child</div><div style="position:absolute;z-index:6"><svg class="a" style="left:310px;top:791px" width="6" height="10" viewBox="0 0 6 10"><path d="M0.5 0.5L5.5 5L0.5 9.5z" fill="#111"/></svg></div><div class="menu" style="left:321px;top:216px;width:113px;height:622px;z-index:7"></div><div style="position:absolute;left:0;top:0;z-index:8"><div class="mi" style="left:327px;top:217px">Bulkmail</div><svg class="a" style="left:424px;top:224px" width="6" height="10" viewBox="0 0 6 10"><path d="M0.5 0.5L5.5 5L0.5 9.5z" fill="#111"/></svg><div class="mi" style="left:327px;top:237px">Calendar</div><svg class="a" style="left:424px;top:244px" width="6" height="10" viewBox="0 0 6 10"><path d="M0.5 0.5L5.5 5L0.5 9.5z" fill="#111"/></svg><div class="mi" style="left:327px;top:257px">Data Sources</div><svg class="a" style="left:424px;top:264px" width="6" height="10" viewBox="0 0 6 10"><path d="M0.5 0.5L5.5 5L0.5 9.5z" fill="#111"/></svg><div class="mi" style="left:327px;top:277px">Design</div><svg class="a" style="left:424px;top:284px" width="6" height="10" viewBox="0 0 6 10"><path d="M0.5 0.5L5.5 5L0.5 9.5z" fill="#111"/></svg><div class="mi" style="left:327px;top:297px">E-Commerce</div><svg class="a" style="left:424px;top:304px" width="6" height="10" viewBox="0 0 6 10"><path d="M0.5 0.5L5.5 5L0.5 9.5z" fill="#111"/></svg><div class="mi" style="left:327px;top:317px">Files</div><svg class="a" style="left:424px;top:324px" width="6" height="10" viewBox="0 0 6 10"><path d="M0.5 0.5L5.5 5L0.5 9.5z" fill="#111"/></svg><div class="mi" style="left:327px;top:337px">Filesystem</div><svg class="a" style="left:424px;top:344px" width="6" height="10" viewBox="0 0 6 10"><path d="M0.5 0.5L5.5 5L0.5 9.5z" fill="#111"/></svg><div class="mi" style="left:327px;top:357px">Funnelback</div><svg class="a" style="left:424px;top:364px" width="6" height="10" viewBox="0 0 6 10"><path d="M0.5 0.5L5.5 5L0.5 9.5z" fill="#111"/></svg><div class="mi" style="left:327px;top:377px">Google Analytics</div><svg class="a" style="left:424px;top:384px" width="6" height="10" viewBox="0 0 6 10"><path d="M0.5 0.5L5.5 5L0.5 9.5z" fill="#111"/></svg><div class="mi" style="left:327px;top:397px">Google Maps</div><svg class="a" style="left:424px;top:404px" width="6" height="10" viewBox="0 0 6 10"><path d="M0.5 0.5L5.5 5L0.5 9.5z" fill="#111"/></svg><div class="mi" style="left:327px;top:417px">LDAP</div><svg class="a" style="left:424px;top:424px" width="6" height="10" viewBox="0 0 6 10"><path d="M0.5 0.5L5.5 5L0.5 9.5z" fill="#111"/></svg><div class="mi" style="left:327px;top:437px">Layouts</div><svg class="a" style="left:424px;top:444px" width="6" height="10" viewBox="0 0 6 10"><path d="M0.5 0.5L5.5 5L0.5 9.5z" fill="#111"/></svg><div class="mi" style="left:327px;top:457px">Lexicon</div><svg class="a" style="left:424px;top:464px" width="6" height="10" viewBox="0 0 6 10"><path d="M0.5 0.5L5.5 5L0.5 9.5z" fill="#111"/></svg><div class="mi" style="left:327px;top:477px">Marketo</div><svg class="a" style="left:424px;top:484px" width="6" height="10" viewBox="0 0 6 10"><path d="M0.5 0.5L5.5 5L0.5 9.5z" fill="#111"/></svg><div class="mi" style="left:327px;top:497px">Mirror</div><svg class="a" style="left:424px;top:504px" width="6" height="10" viewBox="0 0 6 10"><path d="M0.5 0.5L5.5 5L0.5 9.5z" fill="#111"/></svg><div class="mi" style="left:327px;top:517px">News</div><svg class="a" style="left:424px;top:524px" width="6" height="10" viewBox="0 0 6 10"><path d="M0.5 0.5L5.5 5L0.5 9.5z" fill="#111"/></svg><div class="mi" style="left:327px;top:537px">Oauth2</div><svg class="a" style="left:424px;top:544px" width="6" height="10" viewBox="0 0 6 10"><path d="M0.5 0.5L5.5 5L0.5 9.5z" fill="#111"/></svg><div class="mi" style="left:327px;top:557px">Other Assets</div><svg class="a" style="left:424px;top:564px" width="6" height="10" viewBox="0 0 6 10"><path d="M0.5 0.5L5.5 5L0.5 9.5z" fill="#111"/></svg><div class="mi" style="left:327px;top:577px">Pages</div><svg class="a" style="left:424px;top:584px" width="6" height="10" viewBox="0 0 6 10"><path d="M0.5 0.5L5.5 5L0.5 9.5z" fill="#111"/></svg><div class="mi" style="left:327px;top:597px">Reports</div><svg class="a" style="left:424px;top:604px" width="6" height="10" viewBox="0 0 6 10"><path d="M0.5 0.5L5.5 5L0.5 9.5z" fill="#111"/></svg><div class="mi" style="left:327px;top:617px">SAML</div><svg class="a" style="left:424px;top:624px" width="6" height="10" viewBox="0 0 6 10"><path d="M0.5 0.5L5.5 5L0.5 9.5z" fill="#111"/></svg><div class="mi" style="left:327px;top:637px">Schemas</div><svg class="a" style="left:424px;top:644px" width="6" height="10" viewBox="0 0 6 10"><path d="M0.5 0.5L5.5 5L0.5 9.5z" fill="#111"/></svg><div class="mi" style="left:327px;top:657px">Search</div><svg class="a" style="left:424px;top:664px" width="6" height="10" viewBox="0 0 6 10"><path d="M0.5 0.5L5.5 5L0.5 9.5z" fill="#111"/></svg><div class="mi" style="left:327px;top:677px">Sharepoint</div><svg class="a" style="left:424px;top:684px" width="6" height="10" viewBox="0 0 6 10"><path d="M0.5 0.5L5.5 5L0.5 9.5z" fill="#111"/></svg><div class="mi" style="left:327px;top:697px">Sugar</div><svg class="a" style="left:424px;top:704px" width="6" height="10" viewBox="0 0 6 10"><path d="M0.5 0.5L5.5 5L0.5 9.5z" fill="#111"/></svg><div class="mi" style="left:327px;top:717px">TRIM</div><svg class="a" style="left:424px;top:724px" width="6" height="10" viewBox="0 0 6 10"><path d="M0.5 0.5L5.5 5L0.5 9.5z" fill="#111"/></svg><div class="mi" style="left:327px;top:737px">Triggers</div><svg class="a" style="left:424px;top:744px" width="6" height="10" viewBox="0 0 6 10"><path d="M0.5 0.5L5.5 5L0.5 9.5z" fill="#111"/></svg><div class="mi" style="left:327px;top:757px">Users</div><svg class="a" style="left:424px;top:764px" width="6" height="10" viewBox="0 0 6 10"><path d="M0.5 0.5L5.5 5L0.5 9.5z" fill="#111"/></svg><div class="mi" style="left:327px;top:777px">Web</div><svg class="a" style="left:424px;top:784px" width="6" height="10" viewBox="0 0 6 10"><path d="M0.5 0.5L5.5 5L0.5 9.5z" fill="#111"/></svg><div class="mi" style="left:327px;top:797px">Web Services</div><svg class="a" style="left:424px;top:804px" width="6" height="10" viewBox="0 0 6 10"><path d="M0.5 0.5L5.5 5L0.5 9.5z" fill="#111"/></svg><svg class="ic" style="left:326px;top:819px;width:16px;height:16px" viewBox="0 0 16 16"><use href="#folder"/></svg><div class="mi" style="left:346px;top:817px">Folder</div></div><div class="menu" style="left:434px;top:416px;width:234px;height:422px;z-index:9"></div><div style="position:absolute;left:0;top:0;z-index:10"><svg class="ic" style="left:438px;top:419px;width:16px;height:16px" viewBox="0 0 16 16"><use href="#acct"/></svg><div class="mi" style="left:459px;top:417px">Account Manager Page</div><svg class="ic" style="left:438px;top:439px;width:16px;height:16px" viewBox="0 0 16 16"><use href="#builder"/></svg><div class="mi" style="left:459px;top:437px">Asset Builder Page</div><svg class="ic" style="left:438px;top:459px;width:16px;height:16px" viewBox="0 0 16 16"><use href="#listing"/></svg><div class="mi" style="left:459px;top:457px">Asset Listing Page</div><svg class="ic" style="left:438px;top:479px;width:16px;height:16px" viewBox="0 0 16 16"><use href="#form"/></svg><div class="mi" style="left:459px;top:477px">Custom Form</div><svg class="ic" style="left:438px;top:499px;width:16px;height:16px" viewBox="0 0 16 16"><use href="#form"/></svg><div class="mi" style="left:459px;top:497px">Decision Tree</div><svg class="ic" style="left:438px;top:519px;width:16px;height:16px" viewBox="0 0 16 16"><use href="#listing"/></svg><div class="mi" style="left:459px;top:517px">Hit Count Listing Page</div><svg class="ic" style="left:438px;top:539px;width:16px;height:16px" viewBox="0 0 16 16"><use href="#link"/></svg><div class="mi" style="left:459px;top:537px">Link</div><svg class="ic" style="left:438px;top:559px;width:16px;height:16px" viewBox="0 0 16 16"><use href="#page"/></svg><div class="mi" style="left:459px;top:557px">Link Manager Page</div><svg class="ic" style="left:438px;top:579px;width:16px;height:16px" viewBox="0 0 16 16"><use href="#poll"/></svg><div class="mi" style="left:459px;top:577px">Online Poll</div><svg class="ic" style="left:438px;top:599px;width:16px;height:16px" viewBox="0 0 16 16"><use href="#form"/></svg><div class="mi" style="left:459px;top:597px">Online Quiz</div><svg class="ic" style="left:438px;top:619px;width:16px;height:16px" viewBox="0 0 16 16"><use href="#mcq"/></svg><div class="mi" style="left:459px;top:617px">Online Quiz Multiple-Choice Question</div><svg class="ic" style="left:438px;top:639px;width:16px;height:16px" viewBox="0 0 16 16"><use href="#folder"/></svg><div class="mi" style="left:459px;top:637px">Online Quiz Question Group</div><svg class="ic" style="left:438px;top:659px;width:16px;height:16px" viewBox="0 0 16 16"><use href="#page"/></svg><div class="mi" style="left:459px;top:657px">Password Reset Page</div><svg class="ic" style="left:438px;top:679px;width:16px;height:16px" viewBox="0 0 16 16"><use href="#redirect"/></svg><div class="mi" style="left:459px;top:677px">Redirect Page</div><svg class="ic" style="left:438px;top:699px;width:16px;height:16px" viewBox="0 0 16 16"><use href="#listing"/></svg><div class="mi" style="left:459px;top:697px">Related Asset Listing Page</div><svg class="ic" style="left:438px;top:719px;width:16px;height:16px" viewBox="0 0 16 16"><use href="#remote"/></svg><div class="mi" style="left:459px;top:717px">Remote Content</div><svg class="ic" style="left:438px;top:739px;width:16px;height:16px" viewBox="0 0 16 16"><use href="#sitemap"/></svg><div class="mi" style="left:459px;top:737px">Site Map</div><div class="a" style="left:435px;top:757px;width:232px;height:20px;background:#555"></div><svg class="ic" style="left:438px;top:759px;width:16px;height:16px" viewBox="0 0 16 16"><use href="#page"/></svg><div class="mi" style="left:459px;top:757px;color:#fff;text-shadow:1px 1px 1px #000">Standard Page</div><svg class="ic" style="left:438px;top:779px;width:16px;height:16px" viewBox="0 0 16 16"><use href="#listing"/></svg><div class="mi" style="left:459px;top:777px">Tag Listing Page</div><svg class="ic" style="left:438px;top:799px;width:16px;height:16px" viewBox="0 0 16 16"><use href="#page"/></svg><div class="mi" style="left:459px;top:797px">User Group Manager Page</div><svg class="ic" style="left:438px;top:819px;width:16px;height:16px" viewBox="0 0 16 16"><use href="#whatsnew"/></svg><div class="mi" style="left:459px;top:817px">Whats New</div></div><div class="a" style="left:0;top:840px;width:8px;height:8px;background:#8c6a3e;z-index:20"><div style="width:8px;height:8px;background:#f1f1f1;border-bottom-left-radius:8px"></div></div><div class="a" style="left:1452px;top:840px;width:8px;height:8px;background:#2e3136;z-index:20"><div style="width:8px;height:8px;background:#f1f1f1;border-bottom-right-radius:8px"></div></div></body></html>
